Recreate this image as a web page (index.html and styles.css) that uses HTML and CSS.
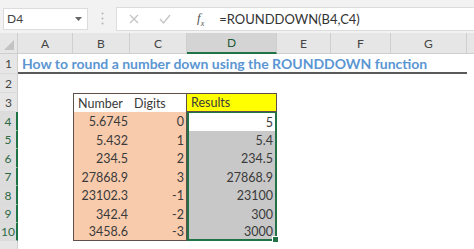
FILE: index.html
```html
<!DOCTYPE html>
<html>
  <head>
    <title>ROUNDDOWN</title>
    <link rel="stylesheet" href="styles.css">
  </head>
  <body>
    <div class="formula-bar">
      <div class="name-box">
        <span>D4</span>
        <svg class="caret" width="7" height="4" viewBox="0 0 7 4"><path d="M0 0h7L3.5 4z" fill="#666"/></svg>
      </div>
      <svg class="grip" width="3" height="13" viewBox="0 0 3 13">
        <circle cx="1.5" cy="1.5" r="1" fill="#b5b5b5"/>
        <circle cx="1.5" cy="6.5" r="1" fill="#b5b5b5"/>
        <circle cx="1.5" cy="11.5" r="1" fill="#b5b5b5"/>
      </svg>
      <div class="formula-box">
        <svg class="fb-icon" width="10" height="10" viewBox="0 0 10 10"><path d="M1 1l8 8M9 1l-8 8" stroke="#c4c4c4" stroke-width="1.3"/></svg>
        <svg class="fb-icon enter" width="12" height="10" viewBox="0 0 12 10"><path d="M1 5l3.5 4L11 1" stroke="#c4c4c4" stroke-width="1.3" fill="none"/></svg>
        <span class="fx"><i>f</i><sub>x</sub></span>
        <span class="formula">=ROUNDDOWN(B4,C4)</span>
      </div>
    </div>

    <div class="sheet">
      <div class="corner"><svg width="10" height="10" viewBox="0 0 10 10"><path d="M10 0v10H0z" fill="#c3c3c3"/></svg></div>
      <div class="col-head">A</div>
      <div class="col-head">B</div>
      <div class="col-head">C</div>
      <div class="col-head active">D</div>
      <div class="col-head">E</div>
      <div class="col-head">F</div>
      <div class="col-head">G</div>
      <div class="col-head last"></div>

      <div class="row-head">1</div>
      <div class="title">How to round a number down using the ROUNDDOWN function</div>
      <div class="cell"></div>

      <div class="row-head">2</div>
      <div class="cell"></div><div class="cell"></div><div class="cell"></div><div class="cell"></div><div class="cell"></div><div class="cell"></div><div class="cell"></div><div class="cell"></div>

      <div class="row-head">3</div>
      <div class="cell"></div>
      <div class="cell label box-top box-left">Number</div>
      <div class="cell label box-top box-right">Digits</div>
      <div class="cell label results">Results</div>
      <div class="cell"></div><div class="cell"></div><div class="cell"></div><div class="cell"></div>

      <div class="row-head sel">4</div>
      <div class="cell"></div>
      <div class="cell num salmon box-left">5.6745</div>
      <div class="cell num salmon box-right">0</div>
      <div class="cell num pick pick-top">5</div>
      <div class="cell"></div><div class="cell"></div><div class="cell"></div><div class="cell"></div>

      <div class="row-head sel">5</div>
      <div class="cell"></div>
      <div class="cell num salmon box-left">5.432</div>
      <div class="cell num salmon box-right">1</div>
      <div class="cell num pick shade">5.4</div>
      <div class="cell"></div><div class="cell"></div><div class="cell"></div><div class="cell"></div>

      <div class="row-head sel">6</div>
      <div class="cell"></div>
      <div class="cell num salmon box-left">234.5</div>
      <div class="cell num salmon box-right">2</div>
      <div class="cell num pick shade">234.5</div>
      <div class="cell"></div><div class="cell"></div><div class="cell"></div><div class="cell"></div>

      <div class="row-head sel">7</div>
      <div class="cell"></div>
      <div class="cell num salmon box-left">27868.9</div>
      <div class="cell num salmon box-right">3</div>
      <div class="cell num pick shade">27868.9</div>
      <div class="cell"></div><div class="cell"></div><div class="cell"></div><div class="cell"></div>

      <div class="row-head sel">8</div>
      <div class="cell"></div>
      <div class="cell num salmon box-left">23102.3</div>
      <div class="cell num salmon box-right">-1</div>
      <div class="cell num pick shade">23100</div>
      <div class="cell"></div><div class="cell"></div><div class="cell"></div><div class="cell"></div>

      <div class="row-head sel">9</div>
      <div class="cell"></div>
      <div class="cell num salmon box-left">342.4</div>
      <div class="cell num salmon box-right">-2</div>
      <div class="cell num pick shade">300</div>
      <div class="cell"></div><div class="cell"></div><div class="cell"></div><div class="cell"></div>

      <div class="row-head sel">10</div>
      <div class="cell"></div>
      <div class="cell num salmon box-left box-bottom">3458.6</div>
      <div class="cell num salmon box-right box-bottom">-3</div>
      <div class="cell num pick shade pick-bottom">3000<span class="handle"></span></div>
      <div class="cell"></div><div class="cell"></div><div class="cell"></div><div class="cell"></div>

      <div class="row-head"></div>
    </div>
  </body>
</html>
```

FILE: styles.css
```css
body {
  margin: 0;
  width: 474px;
  height: 249px;
  overflow: hidden;
  background: #fff;
  font-family: Lato, "Liberation Sans", sans-serif;
  color: #3a3a3a;
}

.formula-bar {
  display: flex;
  align-items: center;
  height: 33px;
  background: #f2f2f2;
  padding-left: 3px;
  box-sizing: border-box;
}

.name-box {
  display: flex;
  align-items: center;
  justify-content: space-between;
  width: 85px;
  height: 22px;
  margin-top: 4px;
  padding: 0 5px 0 3px;
  box-sizing: border-box;
  background: #fff;
  border: 1px solid #dcdcdc;
  font-size: 12px;
  color: #444;
}

.grip {
  margin: 4px 12px 0 13px;
}

.formula-box {
  display: flex;
  align-items: center;
  flex: 1;
  height: 22px;
  margin-top: 4px;
  background: #fff;
  border: 1px solid #dcdcdc;
  border-right: none;
  padding-left: 12px;
}

.fb-icon {
  margin-right: 20px;
}

.fb-icon.enter {
  margin-right: 26px;
}

.fx {
  font-family: "Liberation Serif", serif;
  font-size: 13px;
  color: #555;
  margin-right: 15px;
}

.fx sub {
  font-size: 8px;
  font-style: italic;
}

.formula {
  font-size: 13px;
  color: #333;
}

.sheet {
  display: grid;
  grid-template-columns: 18px 55px 57px 57px 90px 54px 60px 76px 1fr;
  grid-template-rows: 21px 20px 19px 19px 19px 18px 19px 18px 19px 18px 18px 20px;
  font-size: 12.5px;
}

.corner {
  display: flex;
  align-items: flex-end;
  justify-content: flex-end;
  padding: 0 3px 3px 0;
  background: #e6e6e6;
  border-right: 1px solid #cfcfcf;
  border-bottom: 1px solid #cfcfcf;
}

.col-head {
  display: flex;
  align-items: center;
  justify-content: center;
  background: #e6e6e6;
  border-right: 1px solid #cfcfcf;
  border-bottom: 1px solid #cfcfcf;
  font-size: 12px;
  color: #444;
}

.col-head.active {
  background: #d4d4d4;
  border-bottom: 2px solid #217346;
  color: #1f5c37;
}

.col-head.last {
  border-right: none;
}

.row-head {
  display: flex;
  align-items: center;
  justify-content: center;
  background: #e6e6e6;
  border-right: 1px solid #cfcfcf;
  border-bottom: 1px solid #dadada;
  font-size: 12px;
  color: #444;
  box-sizing: border-box;
}

.row-head.sel {
  background: #dcdcdc;
  border-right: 2px solid #217346;
  color: #2c6a45;
}

.cell {
  display: flex;
  align-items: center;
  box-sizing: border-box;
  position: relative;
  white-space: nowrap;
}

.title {
  grid-column: 2 / 9;
  display: flex;
  align-items: center;
  padding-left: 4px;
  border-bottom: 2px solid #5a5a5a;
  font-size: 14px;
  font-weight: bold;
  color: #5b96d3;
  white-space: nowrap;
}

.label {
  padding-left: 4px;
}

.num {
  justify-content: flex-end;
  padding-right: 2px;
}

.salmon {
  background: #f8cbad;
}

.box-top {
  border-top: 1px solid #5e5049;
}

.box-left {
  border-left: 1px solid #5e5049;
}

.box-right {
  border-right: 1px solid #5e5049;
}

.box-bottom {
  border-bottom: 1px solid #5e5049;
}

.results {
  background: #ffff00;
  border: 1px solid #5e5049;
  border-left: none;
}

.pick {
  border-left: 2px solid #217346;
  border-right: 2px solid #217346;
}

.pick-top {
  border-top: 1px solid #217346;
}

.pick-bottom {
  border-bottom: 2px solid #217346;
}

.shade {
  background: #c8c8c8;
}

.handle {
  position: absolute;
  right: -4px;
  bottom: -4px;
  width: 5px;
  height: 5px;
  background: #217346;
  border: 1px solid #fff;
}
```
